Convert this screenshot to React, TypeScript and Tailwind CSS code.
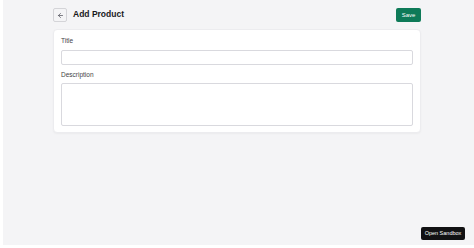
import React from "react";

export default function App() {
  return (
    <div className="w-[474px] h-[248px] bg-white overflow-hidden" style={{ fontFamily: '"Liberation Sans", Arial, sans-serif' }}>
      <div className="ml-[3px] h-[245px] bg-[#f4f4f6] relative">
        <div className="w-[368px] pt-[8px] ml-[50px]">
          <div className="flex items-center justify-between h-[14px]">
            <div className="flex items-center gap-[6px]">
              <button className="w-[14px] h-[14px] border border-[#d4d4d8] rounded-[2px] bg-[#f4f4f6] flex items-center justify-center">
                <svg width="7" height="7" viewBox="0 0 24 24" fill="none" stroke="#52525b" strokeWidth="2.5" strokeLinecap="round" strokeLinejoin="round">
                  <path d="M19 12H5" />
                  <path d="M12 19l-7-7 7-7" />
                </svg>
              </button>
              <h1 className="text-[8.5px] font-bold text-[#18181b] leading-none -mt-[2px]">Add Product</h1>
            </div>
            <button className="w-[25px] h-[14px] rounded-[2px] bg-[#0e7a58] text-white text-[6px] leading-none flex items-center justify-center">Save</button>
          </div>
          <div className="mt-[7px] bg-white rounded-[4px] border border-[#ececef] shadow-[0_1px_2px_rgba(0,0,0,0.04)] px-[7px] pt-[8px] pb-[6px]">
            <div className="text-[6.5px] text-[#3f3f46] leading-none">Title</div>
            <div className="mt-[5px] h-[15px] border border-[#d9d9de] rounded-[2px] bg-white"></div>
            <div className="mt-[7px] text-[6.5px] text-[#3f3f46] leading-none">Description</div>
            <div className="mt-[5px] h-[43px] border border-[#d9d9de] rounded-[2px] bg-white"></div>
          </div>
        </div>
        <button className="absolute left-[418px] top-[227px] w-[44px] h-[13px] rounded-[2px] bg-[#111113] text-white text-[5.5px] leading-none flex items-center justify-center whitespace-nowrap">Open Sandbox</button>
      </div>
    </div>
  );
}
